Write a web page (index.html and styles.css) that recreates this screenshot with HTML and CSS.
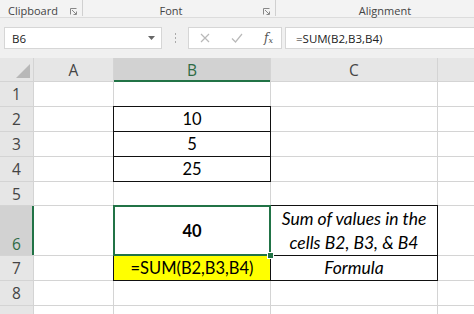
FILE: index.html
```html
<!DOCTYPE html>
<html lang="en">
<head>
    <meta charset="UTF-8">
    <title>SUM formula</title>
    <link rel="stylesheet" href="styles.css">
</head>
<body>
    <!-- Ribbon group labels -->
    <div class="ribbon">
        <div class="group group-clipboard">
            <span>Clipboard</span>
            <svg class="launcher" width="7" height="7" viewBox="0 0 7 7"><path d="M0.5 6.5V0.5H6.5" fill="none" stroke="#888"/><path d="M2 2L6 6M3.5 6.5H6.5V3.5" fill="none" stroke="#888"/></svg>
        </div>
        <div class="group group-font">
            <span>Font</span>
            <svg class="launcher" width="7" height="7" viewBox="0 0 7 7"><path d="M0.5 6.5V0.5H6.5" fill="none" stroke="#888"/><path d="M2 2L6 6M3.5 6.5H6.5V3.5" fill="none" stroke="#888"/></svg>
        </div>
        <div class="group group-align">
            <span>Alignment</span>
        </div>
    </div>

    <!-- Formula bar -->
    <div class="formula-bar">
        <div class="name-box">
            <span>B6</span>
            <svg width="7" height="4" viewBox="0 0 7 4"><path d="M0 0H7L3.5 4Z" fill="#666"/></svg>
        </div>
        <div class="grip"><i></i><i></i><i></i></div>
        <div class="fx-box">
            <svg width="10" height="10" viewBox="0 0 10 10"><path d="M1 1L9 9M9 1L1 9" stroke="#b9b9b9" stroke-width="1.2"/></svg>
            <svg width="12" height="10" viewBox="0 0 12 10"><path d="M1 5.5L4.5 9L11 1" fill="none" stroke="#b9b9b9" stroke-width="1.2"/></svg>
            <span class="fx">f<sub>x</sub></span>
        </div>
        <div class="formula">=SUM(B2,B3,B4)</div>
    </div>

    <!-- Sheet -->
    <div class="sheet">
        <div class="hd corner"></div>
        <div class="hd col">A</div>
        <div class="hd col sel-col">B</div>
        <div class="hd col">C</div>
        <div class="hd col"></div>

        <div class="hd row">1</div><div class="cell"></div><div class="cell"></div><div class="cell"></div><div class="cell"></div>
        <div class="hd row">2</div><div class="cell"></div><div class="cell boxed">10</div><div class="cell"></div><div class="cell"></div>
        <div class="hd row">3</div><div class="cell"></div><div class="cell boxed">5</div><div class="cell"></div><div class="cell"></div>
        <div class="hd row">4</div><div class="cell"></div><div class="cell boxed">25</div><div class="cell"></div><div class="cell"></div>
        <div class="hd row">5</div><div class="cell"></div><div class="cell"></div><div class="cell"></div><div class="cell"></div>
        <div class="hd row sel-row">6</div><div class="cell"></div>
        <div class="cell active"><b>40</b><span class="handle"></span></div>
        <div class="cell boxed note">Sum of values in the cells B2, B3, &amp; B4</div>
        <div class="cell"></div>
        <div class="hd row">7</div><div class="cell"></div><div class="cell boxed yellow">=SUM(B2,B3,B4)</div><div class="cell boxed note">Formula</div><div class="cell"></div>
        <div class="hd row">8</div><div class="cell"></div><div class="cell"></div><div class="cell"></div><div class="cell"></div>
        <div class="hd row"></div><div class="cell"></div><div class="cell"></div><div class="cell"></div><div class="cell"></div>
    </div>
</body>
</html>
```
FILE: styles.css
```css
body {
    margin: 0;
    width: 474px;
    height: 314px;
    overflow: hidden;
    background: #fff;
    font-family: "Open Sans", sans-serif;
}

/* ribbon labels */
.ribbon {
    display: flex;
    height: 17px;
    background: #f3f3f3;
    border-bottom: 1px solid #dcdcdc;
    font-size: 11px;
    color: #444;
    white-space: nowrap;
}
.group {
    flex-shrink: 0;
    display: flex;
    align-items: flex-start;
    justify-content: center;
    position: relative;
    padding: 3px 16px 0 0;
    box-sizing: border-box;
    border-right: 1px solid #d0d0d0;
    height: 16px;
}
.group-clipboard { width: 83px; }
.group-font { width: 193px; }
.group-align {
    width: 198px;
    padding: 3px 0 0 20px;
    border-right: none;
}
.launcher {
    position: absolute;
    right: 5px;
    top: 8px;
}

/* formula bar */
.formula-bar {
    display: flex;
    align-items: center;
    height: 40px;
    background: #f0f0f0;
    padding-left: 4px;
    font-size: 11.5px;
    color: #222;
}
.name-box {
    width: 158px;
    height: 22px;
    box-sizing: border-box;
    background: #fff;
    border: 1px solid #d6d6d6;
    display: flex;
    align-items: center;
    justify-content: space-between;
    padding: 0 6px 0 7px;
}
.grip {
    width: 26px;
    display: flex;
    flex-direction: column;
    align-items: center;
    gap: 2px;
}
.grip i {
    width: 1px;
    height: 2px;
    background: #aaa;
}
.fx-box {
    width: 94px;
    height: 22px;
    box-sizing: border-box;
    background: #fff;
    border: 1px solid #d6d6d6;
    display: flex;
    align-items: center;
    padding-left: 11px;
    gap: 21px;
}
.fx {
    font-family: "DejaVu Serif", serif;
    font-style: italic;
    font-size: 12px;
    color: #555;
}
.fx sub {
    font-size: 8px;
    vertical-align: -1px;
}
.formula {
    flex: 1;
    height: 22px;
    box-sizing: border-box;
    margin-left: 3px;
    background: #fff;
    border: 1px solid #d6d6d6;
    border-right: none;
    display: flex;
    align-items: center;
    padding-left: 10px;
}

/* sheet grid */
.sheet {
    display: grid;
    grid-template-columns: 33px 79px 156px 166px 36px;
    grid-template-rows: 23px 24px 24px 24px 24px 23px 49px 24px 24px 8px;
    gap: 1px;
    background: #d4d4d4;
    font-family: Lato, sans-serif;
    font-size: 16.5px;
    color: #000;
}
.hd {
    background: #e6e6e6;
    color: #444;
    font-family: "Open Sans", sans-serif;
    font-size: 15.5px;
    display: flex;
    align-items: center;
    justify-content: center;
}
.corner {
    position: relative;
}
.corner::after {
    content: "";
    position: absolute;
    right: 3px;
    bottom: 3px;
    border-style: solid;
    border-width: 0 0 14px 14px;
    border-color: transparent transparent #b8b8b8 transparent;
}
.sel-col {
    background: #d2d2d2;
    color: #2f6b45;
    box-shadow: inset 0 -1px 0 #217346, 0 1px 0 #217346;
}
.sel-row {
    background: #d2d2d2;
    color: #2f6b45;
    align-items: flex-end;
    box-shadow: inset -1px 0 0 #217346, 1px 0 0 #217346;
}
.cell {
    background: #fff;
    display: flex;
    align-items: center;
    justify-content: center;
    text-align: center;
}
.boxed {
    outline: 1px solid #111;
}
.yellow {
    background: #ffff00;
}
.note {
    font-style: italic;
    font-size: 17.5px;
    line-height: 24px;
    padding: 0 4px;
}
.active {
    position: relative;
    z-index: 1;
    outline: 2px solid #217346;
    outline-offset: -1px;
}
.handle {
    position: absolute;
    right: -4px;
    bottom: -4px;
    width: 5px;
    height: 5px;
    background: #217346;
    border: 1px solid #fff;
}
```
